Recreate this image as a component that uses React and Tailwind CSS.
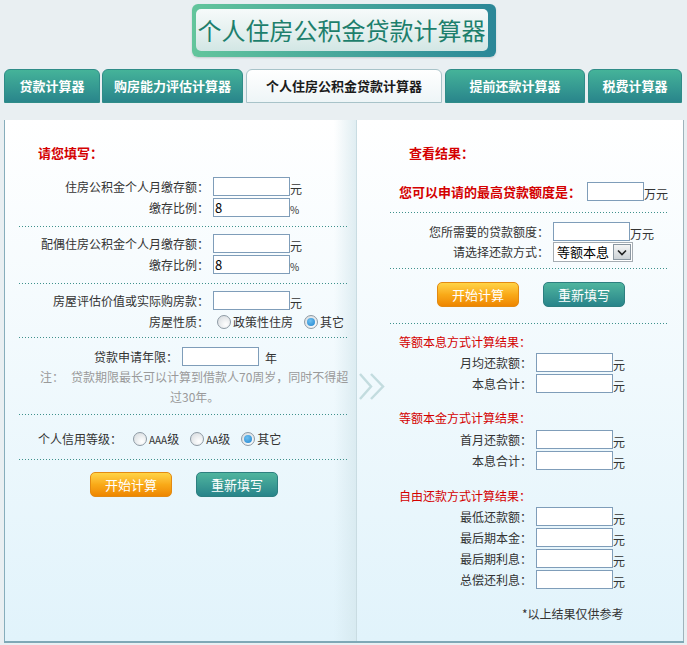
import React from "react";

function Input({ value = "", w = "w-[77px]" }) {
  return (
    <input
      readOnly
      value={value}
      className={`${w} h-[19px] shrink-0 border border-[#7f9db9] bg-white px-[1px] text-[13px] leading-[17px] text-black outline-none`}
    />
  );
}

function Radio({ checked }) {
  return (
    <span className="relative inline-block h-[14px] w-[14px] shrink-0 rounded-full border border-[#8e9aa4] bg-[radial-gradient(circle_at_65%_70%,#ffffff,#d3d8dc)]">
      {checked && <span className="absolute left-[2px] top-[2px] h-[8px] w-[8px] rounded-full bg-[radial-gradient(circle_at_40%_35%,#6fc0f0,#1f84cf)]" />}
    </span>
  );
}

function Dots({ className }) {
  return (
    <div
      className={`h-px bg-[repeating-linear-gradient(90deg,#3f918c_0px,#3f918c_1px,transparent_1px,transparent_3px)] ${className}`}
    />
  );
}

function OrangeBtn({ className = "" }) {
  return (
    <div
      className={`flex h-[25px] w-[82px] items-center justify-center rounded-[5px] border border-[#e38a12] bg-gradient-to-b from-[#ffd445] via-[#f9aa18] to-[#ee8600] text-[13px] text-white ${className}`}
    >
      开始计算
    </div>
  );
}

function TealBtn({ className = "" }) {
  return (
    <div
      className={`flex h-[25px] w-[82px] items-center justify-center rounded-[5px] border border-[#2d7f80] bg-gradient-to-b from-[#4fb59e] to-[#28848a] text-[13px] text-white ${className}`}
    >
      重新填写
    </div>
  );
}

function LRow({ label, value, unit, className = "", pct }) {
  return (
    <div className={`flex h-[19px] items-center ${className}`}>
      <span className="w-[208px] shrink-0 pr-[4px] text-right text-[12px] leading-[19px] text-[#333]">{label}</span>
      <Input value={value} />
      <span className={`mt-[4px] text-[#333] ${pct ? "text-[10px]" : "text-[12px]"}`}>{unit}</span>
    </div>
  );
}

function RRow({ label, className = "" }) {
  return (
    <div className={`flex h-[19px] items-center ${className}`}>
      <span className="w-[179px] shrink-0 pr-[4px] text-right text-[12px] leading-[19px] text-[#333]">{label}</span>
      <Input />
      <span className="mt-[4px] text-[12px] text-[#333]">元</span>
    </div>
  );
}

const tabBase =
  "flex h-[34px] shrink-0 items-center justify-center rounded-t-[6px] border text-[13px] font-bold";
const tabOff =
  "border-[#2f8c88] bg-gradient-to-b from-[#45b399] to-[#29858b] text-white";
const tabOn = "border-[#a8c3c9] bg-gradient-to-b from-white to-[#eef5f7] text-[#1b1b1b]";

export default function App() {
  return (
    <div className="h-[645px] w-[687px] overflow-hidden bg-[#e9eff2] pt-[4px] font-['Noto_Sans_CJK_SC','Noto_Sans',sans-serif]">
      {/* Title */}
      <div className="mx-auto h-[53px] w-[304px] rounded-[6px] bg-gradient-to-r from-[#63c59c] to-[#2b8798] pb-[6px] pl-[4px] pr-[8px] pt-[5px] shadow-[0_1px_2px_rgba(0,0,0,0.15)]">
        <div className="flex h-full items-center justify-center rounded-[5px] bg-gradient-to-b from-[#f6fafa] via-[#e6f1f0] to-[#d2e6e4] text-[24px] leading-none text-[#1d7f6c]">
          个人住房公积金贷款计算器
        </div>
      </div>

      {/* Tabs */}
      <div className="mt-[12px] flex pl-[4px]">
        <div className={`${tabBase} ${tabOff} w-[96px]`}>贷款计算器</div>
        <div className={`${tabBase} ${tabOff} ml-[2px] w-[141px]`}>购房能力评估计算器</div>
        <div className={`${tabBase} ${tabOn} ml-[3px] w-[196px]`}>个人住房公积金贷款计算器</div>
        <div className={`${tabBase} ${tabOff} ml-[3px] w-[140px]`}>提前还款计算器</div>
        <div className={`${tabBase} ${tabOff} ml-[3px] w-[94px]`}>税费计算器</div>
      </div>

      {/* Panel */}
      <div className="relative ml-[4px] mt-[17px] flex w-[680px] border-b-2 border-[#7fa8b6]">
        {/* Left */}
        <div className="relative w-[352px] shrink-0 border-l border-[#86adbb] bg-gradient-to-b from-white to-[#e1f3fb] pt-[25px]">
          <div className="pointer-events-none absolute bottom-0 right-0 top-0 w-[22px] bg-gradient-to-r from-transparent to-[#d3e6ec]/70" />
          <div className="relative">
            <div className="h-[16px] pl-[33px] text-[13px] font-bold leading-[16px] text-[#d40000]">请您填写：</div>
            <LRow className="mt-[16px]" label="住房公积金个人月缴存额：" unit="元" />
            <LRow className="mt-[2px]" label="缴存比例：" value="8" unit="%" pct />
            <Dots className="ml-[14px] mt-[9px] w-[330px]" />
            <LRow className="mt-[7px]" label="配偶住房公积金个人月缴存额：" unit="元" />
            <LRow className="mt-[2px]" label="缴存比例：" value="8" unit="%" pct />
            <Dots className="ml-[14px] mt-[9px] w-[330px]" />
            <LRow className="mt-[7px]" label="房屋评估价值或实际购房款：" unit="元" />
            <div className="mt-[2px] flex h-[20px] items-center text-[12px] text-[#333]">
              <span className="w-[208px] shrink-0 pr-[4px] text-right">房屋性质：</span>
              <span className="ml-[4px] flex items-center">
                <Radio />
                <span className="ml-[2px]">政策性住房</span>
              </span>
              <span className="ml-[11px] flex items-center">
                <Radio checked />
                <span className="ml-[2px]">其它</span>
              </span>
            </div>
            <Dots className="ml-[14px] mt-[5px] w-[330px]" />
            <div className="mt-[9px] flex h-[19px] items-center">
              <span className="w-[177px] shrink-0 pr-[4px] text-right text-[12px] text-[#333]">贷款申请年限：</span>
              <Input />
              <span className="ml-[6px] mt-[3px] text-[12px] text-[#333]">年</span>
            </div>
            <div className="mt-px h-[20px] whitespace-nowrap pl-[35px] text-[12px] leading-[20px] text-[#9a9a9a]">
              注：<span className="ml-[7px]">贷款期限最长可以计算到借款人70周岁，同时不得超</span>
            </div>
            <div className="h-[20px] pl-[165px] text-[12px] leading-[20px] text-[#9a9a9a]">过30年。</div>
            <Dots className="ml-[14px] mt-[7px] w-[330px]" />
            <div className="mt-[14px] flex h-[20px] items-center pl-[33px] text-[12px] text-[#333]">
              <span>个人信用等级：</span>
              <span className="ml-[11px] flex items-center">
                <Radio />
                <span className="ml-[2px]">
                  <span className="text-[10px]">AAA</span>级
                </span>
              </span>
              <span className="ml-[11px] flex items-center">
                <Radio />
                <span className="ml-[2px]">
                  <span className="text-[10px]">AA</span>级
                </span>
              </span>
              <span className="ml-[11px] flex items-center">
                <Radio checked />
                <span className="ml-[2px]">其它</span>
              </span>
            </div>
            <Dots className="ml-[14px] mt-[10px] w-[330px]" />
            <div className="mt-[12px] flex pl-[85px]">
              <OrangeBtn />
              <TealBtn className="ml-[24px]" />
            </div>
          </div>
        </div>

        {/* Right */}
        <div className="w-[328px] shrink-0 border-l border-r border-l-[#c9dce2] border-r-[#9fb3bb] bg-gradient-to-b from-white to-[#e1f3fb] pb-[19px] pt-[25px]">
          <div className="h-[16px] pl-[52px] text-[13px] font-bold leading-[16px] text-[#d40000]">查看结果：</div>
          <div className="mt-[21px] flex h-[19px] items-center">
            <span className="w-[230px] shrink-0 whitespace-nowrap pl-[42px] text-[13px] font-bold text-[#d40000]">您可以申请的最高贷款额度是：</span>
            <Input w="w-[57px]" />
            <span className="mt-[4px] text-[12px] text-[#333]">万元</span>
          </div>
          <Dots className="ml-[33px] mt-[11px] w-[278px]" />
          <div className="mt-[9px] flex h-[19px] items-center">
            <span className="w-[196px] shrink-0 pr-[4px] text-right text-[12px] text-[#333]">您所需要的贷款额度：</span>
            <Input />
            <span className="mt-[4px] text-[12px] text-[#333]">万元</span>
          </div>
          <div className="mt-px flex h-[20px] items-center">
            <span className="w-[196px] shrink-0 pr-[4px] text-right text-[12px] text-[#333]">请选择还款方式：</span>
            <div className="flex h-[20px] w-[80px] items-center border border-[#a5acb2] bg-white">
              <span className="flex-1 pl-[3px] text-[13px] leading-[18px] text-black">等额本息</span>
              <span className="mr-px flex h-[16px] w-[18px] items-center justify-center border border-[#8b97a1] bg-gradient-to-b from-[#f4f4f4] to-[#cdd2d6]">
                <svg width="10" height="7" viewBox="0 0 10 7">
                  <path d="M1 1.5 L5 5.5 L9 1.5" fill="none" stroke="#222" strokeWidth="1.6" />
                </svg>
              </span>
            </div>
          </div>
          <Dots className="ml-[33px] mt-[6px] w-[278px]" />
          <div className="mt-[13px] flex pl-[80px]">
            <OrangeBtn />
            <TealBtn className="ml-[24px]" />
          </div>
          <Dots className="ml-[33px] mt-[16px] w-[278px]" />
          <div className="mt-[10px] h-[16px] pl-[42px] text-[12px] leading-[16px] text-[#d40000]">等额本息方式计算结果：</div>
          <RRow className="mt-[3px]" label="月均还款额：" />
          <RRow className="mt-[2px]" label="本息合计：" />
          <div className="mt-[17px] h-[16px] pl-[42px] text-[12px] leading-[16px] text-[#d40000]">等额本金方式计算结果：</div>
          <RRow className="mt-[4px]" label="首月还款额：" />
          <RRow className="mt-[2px]" label="本息合计：" />
          <div className="mt-[18px] h-[16px] pl-[42px] text-[12px] leading-[16px] text-[#d40000]">自由还款方式计算结果：</div>
          <RRow className="mt-[3px]" label="最低还款额：" />
          <RRow className="mt-[2px]" label="最后期本金：" />
          <RRow className="mt-[2px]" label="最后期利息：" />
          <RRow className="mt-[2px]" label="总偿还利息：" />
          <div className="mt-[17px] h-[16px] pl-[165px] text-[12px] leading-[16px] text-[#333]">*以上结果仅供参考</div>
        </div>

        {/* Chevrons */}
        <svg className="pointer-events-none absolute left-[354px] top-[253px]" width="30" height="28" viewBox="0 0 30 28">
          <path d="M2 1 L13 13.5 L2 26" fill="none" stroke="#c3dcdf" strokeWidth="2.5" />
          <path d="M13 1 L25 13.5 L13 26" fill="none" stroke="#c3dcdf" strokeWidth="2.5" />
        </svg>
      </div>
    </div>
  );
}
